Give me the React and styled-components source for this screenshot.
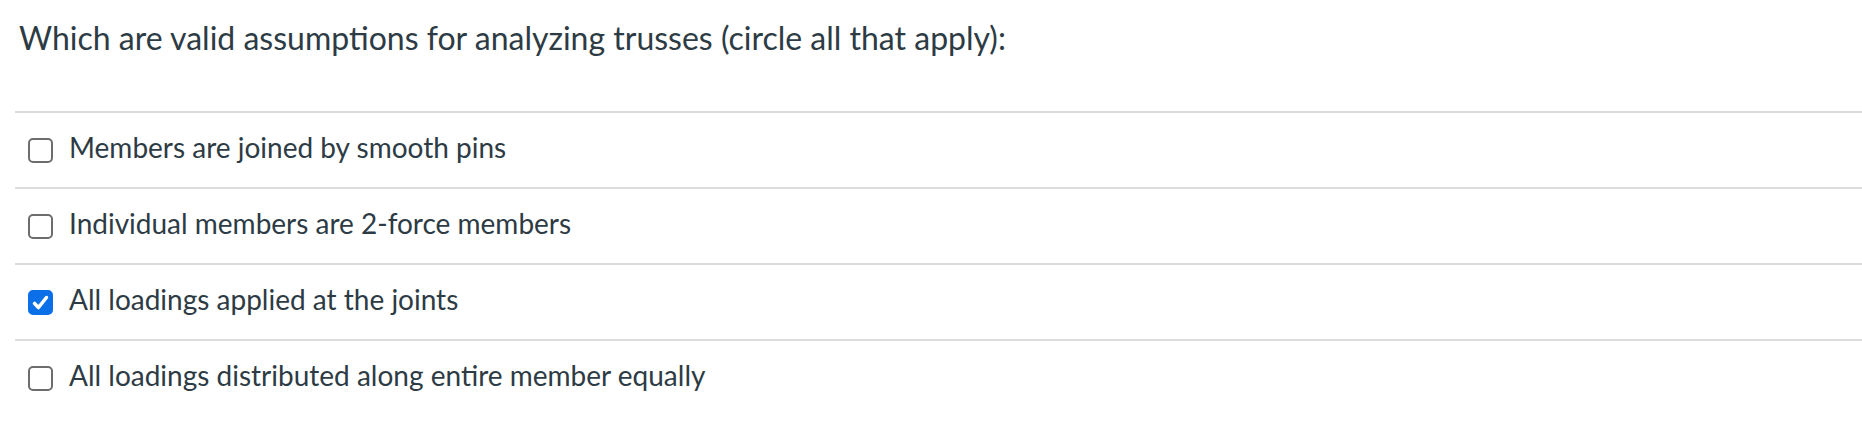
import React, {useState} from 'react';
import styled, {createGlobalStyle} from "styled-components";

const GlobalStyle = createGlobalStyle`
  body {
    margin: 0;
    background: #fff;
    font-family: Lato, "Open Sans", sans-serif;
    color: #2d3b45;
  }
`;

const answers = [
    {id: 'a1', text: 'Members are joined by smooth pins', checked: false},
    {id: 'a2', text: 'Individual members are 2-force members', checked: false},
    {id: 'a3', text: 'All loadings applied at the joints', checked: true},
    {id: 'a4', text: 'All loadings distributed along entire member equally', checked: false},
];

const CheckMark = () => (
    <svg width="19" height="19" viewBox="0 0 16 16" fill="none">
        <path d="M3 8.8 L6.3 12.2 L13 3.8" stroke="#fff" strokeWidth="3" strokeLinecap="round" strokeLinejoin="round"/>
    </svg>
);

const App = () => {
    const [selected, setSelected] = useState(
        answers.reduce((acc, a) => ({...acc, [a.id]: a.checked}), {})
    );

    const toggle = (id) => {
        setSelected({...selected, [id]: !selected[id]});
    }

    return (
        <StyledContainer>
            <GlobalStyle/>
            <QuestionText>
                Which are valid assumptions for analyzing trusses (circle all that apply):
            </QuestionText>
            <AnswerList>
                {answers.map(a => (
                    <AnswerRow key={a.id} onClick={() => toggle(a.id)}>
                        <Box checked={selected[a.id]}>
                            {selected[a.id] && <CheckMark/>}
                        </Box>
                        <AnswerLabel>{a.text}</AnswerLabel>
                    </AnswerRow>
                ))}
            </AnswerList>
        </StyledContainer>
    )
}

const StyledContainer = styled.div`
  padding-left: 15px;
`;

const QuestionText = styled.div`
  padding: 16px 0 0 4px;
  height: 95px;
  font-size: 32px;
  line-height: 44px;
  color: #2d3b45;
`;

const AnswerList = styled.div`
  display: flex;
  flex-direction: column;
`;

const AnswerRow = styled.div`
  display: flex;
  align-items: center;
  gap: 16px;
  height: 74px;
  padding-left: 13px;
  border-top: 2px solid #dcdcdc;
  cursor: pointer;
`;

const Box = styled.span`
  display: flex;
  align-items: center;
  justify-content: center;
  box-sizing: border-box;
  width: 25px;
  height: 25px;
  border-radius: 5px;
  border: 2px solid ${props => props.checked ? '#0b6fe8' : '#6d6d6d'};
  background: ${props => props.checked ? '#0b6fe8' : '#fff'};
`;

const AnswerLabel = styled.span`
  margin-bottom: 6px;
  font-size: 28px;
  line-height: 34px;
  color: #2d3b45;
`;

export default App;
